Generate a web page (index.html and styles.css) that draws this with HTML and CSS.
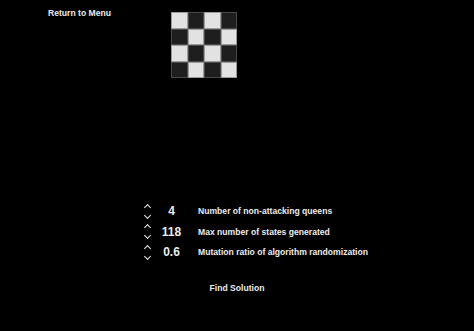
FILE: index.html
```html
<!DOCTYPE html>
<html lang="en">
<head>
    <meta charset="UTF-8">
    <title>N-Queens Genetic Solver</title>
    <link rel="stylesheet" href="styles.css">
</head>
<body>
    <div class="screen">
        <div class="top-bar">
            <button type="button" class="menu-link">Return to Menu</button>
            <div class="board" id="board"></div>
        </div>

        <div class="settings">
            <div class="setting">
                <div class="stepper"><span class="up"></span><span class="down"></span></div>
                <span class="value">4</span>
                <span class="label">Number of non-attacking queens</span>
            </div>
            <div class="setting">
                <div class="stepper"><span class="up"></span><span class="down"></span></div>
                <span class="value">118</span>
                <span class="label">Max number of states generated</span>
            </div>
            <div class="setting">
                <div class="stepper"><span class="up"></span><span class="down"></span></div>
                <span class="value">0.6</span>
                <span class="label">Mutation ratio of algorithm randomization</span>
            </div>
        </div>

        <button type="button" class="solve">Find Solution</button>
    </div>

    <script>
        const size = 4;
        const board = document.getElementById('board');
        for (let r = 0; r < size; r++) {
            for (let c = 0; c < size; c++) {
                const cell = document.createElement('div');
                cell.className = (r + c) % 2 == 0 ? 'cell light' : 'cell dark';
                board.appendChild(cell);
            }
        }
    </script>
</body>
</html>
```

FILE: styles.css
```css
body {
    margin: 0;
    background-color: #000;
    color: #ececec;
    font-family: "Liberation Sans", Arial, sans-serif;
    font-weight: bold;
}
.screen {
    width: 474px;
    height: 331px;
    display: flex;
    flex-direction: column;
}
button {
    background: none;
    border: none;
    color: #ececec;
    font-family: inherit;
    font-weight: bold;
    padding: 0;
    cursor: pointer;
}
.top-bar {
    display: flex;
    align-items: flex-start;
    padding-top: 12px;
}
.menu-link {
    font-size: 8.6px;
    margin-left: 48px;
    margin-top: -4px;
}
.board {
    display: grid;
    grid-template-columns: repeat(4, 16.5px);
    grid-template-rows: repeat(4, 16.5px);
    margin-left: 60px;
}
.cell {
    box-sizing: border-box;
    border: 1px solid #4a4a4a;
}
.light {
    background-color: #e2e2e2;
    border-color: #9a9a9a;
}
.dark {
    background-color: #1e1e1e;
}
.settings {
    margin-top: 125px;
    margin-left: 141px;
    display: flex;
    flex-direction: column;
    gap: 4px;
}
.setting {
    display: flex;
    align-items: center;
    height: 16.5px;
}
.stepper {
    width: 12px;
    display: flex;
    flex-direction: column;
    align-items: center;
    gap: 3px;
}
.stepper span {
    width: 4px;
    height: 4px;
    border-left: 1.5px solid #ececec;
    border-top: 1.5px solid #ececec;
}
.stepper .up {
    transform: rotate(45deg);
}
.stepper .down {
    transform: rotate(-135deg);
}
.value {
    width: 25px;
    text-align: center;
    font-size: 12px;
    margin-left: 6px;
}
.label {
    font-size: 8.6px;
    margin-left: 14px;
}
.solve {
    font-size: 8.6px;
    align-self: center;
    margin-top: 22px;
}
```
